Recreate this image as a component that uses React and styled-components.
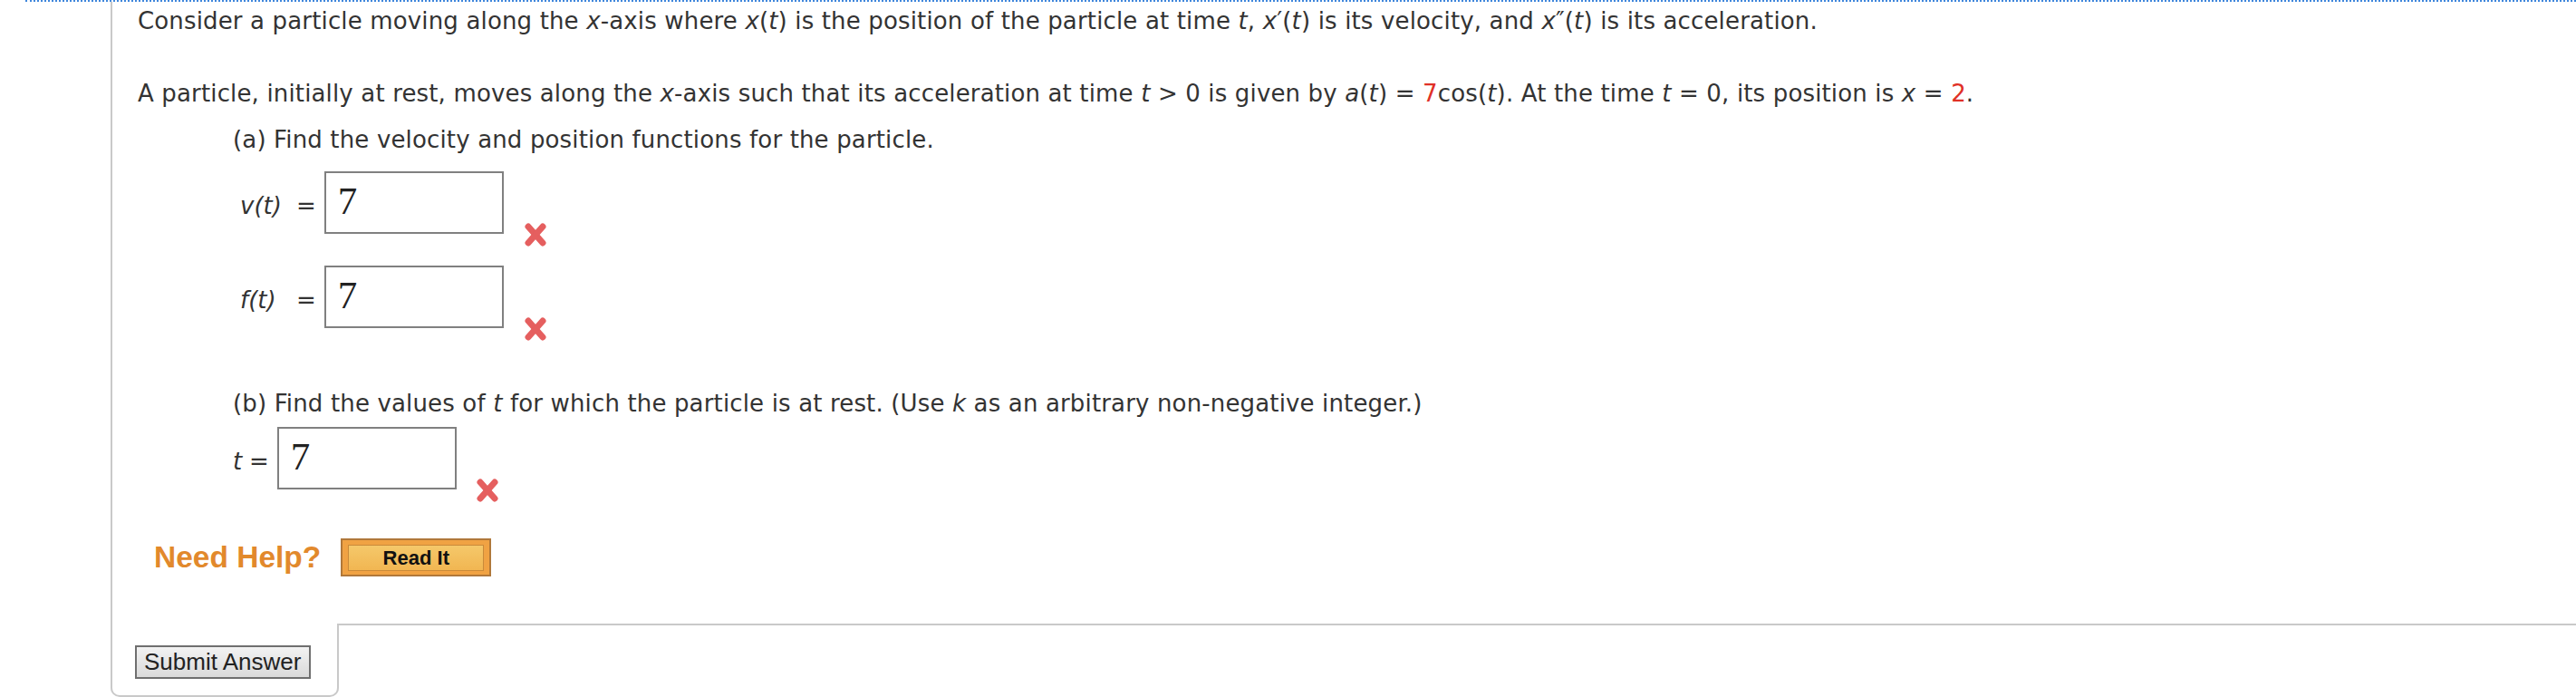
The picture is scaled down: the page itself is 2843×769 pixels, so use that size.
import React from 'react';
import styled, { createGlobalStyle } from 'styled-components';

const GlobalStyle = createGlobalStyle`
  html, body {
    margin: 0;
    padding: 0;
    background: #fff;
  }
  body {
    font-family: "DejaVu Sans", Verdana, sans-serif;
    color: #333;
  }
`;

const Page = styled.div`
  padding-left: 28px;
  width: 2843px;
  box-sizing: border-box;
`;

const Frame = styled.div`
  border-top: 2px dotted #3f86dc;
  padding-left: 94px;
`;

const Content = styled.div`
  border-left: 2px solid #c9c9c9;
  padding: 1px 0 52px 28px;
`;

const Para = styled.p`
  margin: ${p => p.$top || 0}px 0 0 0;
  font-size: 26px;
  line-height: 40px;
  letter-spacing: 0.15px;
  white-space: nowrap;
`;

const Var = styled.i`
  font-style: italic;
`;

const Red = styled.span`
  color: #e03127;
`;

const Part = styled.div`
  padding-left: 105px;
`;

const Row = styled.div`
  display: flex;
  align-items: baseline;
  margin-top: ${p => p.$top || 0}px;
  padding-left: ${p => p.$indent || 0}px;
  font-size: 26px;
  line-height: 40px;
`;

const Label = styled.span`
  min-width: ${p => p.$width || 0}px;
  font-style: italic;
`;

const Eq = styled.span`
  margin-right: 9px;
`;

const AnswerBox = styled.div`
  box-sizing: border-box;
  width: 198px;
  height: 69px;
  border: 2px solid #808080;
  padding: 10px 0 0 13px;
  font-family: "Liberation Serif", "Times New Roman", serif;
  font-size: 43px;
  line-height: 42px;
  color: #222;
`;

const Cross = styled.svg`
  align-self: flex-end;
  flex: none;
  width: 28px;
  height: 28px;
  margin: 0 0 -15px ${p => p.$gap || 21}px;
`;

const HelpRow = styled.div`
  display: flex;
  align-items: center;
  margin-top: 54px;
  padding-left: 18px;
`;

const NeedHelp = styled.span`
  font-family: "Liberation Sans", Arial, sans-serif;
  font-weight: bold;
  font-size: 33.5px;
  color: #e2892c;
  margin-right: 22px;
`;

const ReadIt = styled.button`
  box-sizing: border-box;
  width: 166px;
  height: 42px;
  padding: 5px 6px 4px;
  border: 2px solid #b0783a;
  background: #f0a243;
  cursor: pointer;
`;

const ReadItFace = styled.span`
  display: flex;
  align-items: center;
  justify-content: center;
  height: 100%;
  box-sizing: border-box;
  border: 1px solid #c98a3a;
  background: linear-gradient(#f5c86a, #f1b652);
  font-family: "Liberation Sans", Arial, sans-serif;
  font-weight: bold;
  font-size: 22px;
  color: #111;
`;

const Footer = styled.div`
  display: flex;
  align-items: flex-start;
`;

const Tab = styled.div`
  box-sizing: border-box;
  width: 252px;
  height: 81px;
  border: 2px solid #c9c9c9;
  border-top: none;
  border-radius: 0 0 10px 10px;
  padding: 24px 0 0 25px;
`;

const Filler = styled.div`
  flex: 1;
  border-top: 2px solid #c9c9c9;
`;

const SubmitButton = styled.button`
  box-sizing: border-box;
  width: 194px;
  height: 37px;
  padding: 0 0 0 8px;
  text-align: left;
  border: 2px solid #6f6f6f;
  background: linear-gradient(#f2f2f2, #dadada);
  font-family: "Liberation Sans", Arial, sans-serif;
  font-size: 26px;
  line-height: 33px;
  color: #222;
  cursor: pointer;
`;

const WrongMark = ({ gap }) => (
  <Cross $gap={gap} viewBox="0 0 28 28">
    <defs>
      <filter id="soft" x="-20%" y="-20%" width="140%" height="140%">
        <feGaussianBlur stdDeviation="0.6" />
      </filter>
    </defs>
    <g filter="url(#soft)" stroke="#e55e5e" strokeWidth="7" strokeLinecap="round">
      <path d="M6 5 L22 23" />
      <path d="M22 5 L6 23" />
    </g>
  </Cross>
);

const App = () => (
  <Page>
    <GlobalStyle />
    <Frame>
      <Content>
        <Para>
          Consider a particle moving along the <Var>x</Var>-axis where <Var>x</Var>(<Var>t</Var>) is the position of
          the particle at time <Var>t</Var>, <Var>x</Var>′(<Var>t</Var>) is its velocity, and <Var>x</Var>″(<Var>t</Var>) is its
          acceleration.
        </Para>
        <Para $top={40}>
          A particle, initially at rest, moves along the <Var>x</Var>-axis such that its acceleration at
          time <Var>t</Var> &gt; 0 is given by <Var>a</Var>(<Var>t</Var>) = <Red>7</Red>cos(<Var>t</Var>). At the
          time <Var>t</Var> = 0, its position is <Var>x</Var> = <Red>2</Red>.
        </Para>
        <Part>
          <Para $top={11}>(a) Find the velocity and position functions for the particle.</Para>
          <Row $top={15} $indent={8}>
            <Label $width={62}>v(t)</Label>
            <Eq>=</Eq>
            <AnswerBox>7</AnswerBox>
            <WrongMark gap={21} />
          </Row>
          <Row $top={35} $indent={8}>
            <Label $width={62}>f(t)</Label>
            <Eq>=</Eq>
            <AnswerBox>7</AnswerBox>
            <WrongMark gap={21} />
          </Row>
          <Para $top={63}>
            (b) Find the values of <Var>t</Var> for which the particle is at rest. (Use <Var>k</Var> as an
            arbitrary non-negative integer.)
          </Para>
          <Row $top={6}>
            <Label $width={18}>t</Label>
            <Eq>=</Eq>
            <AnswerBox>7</AnswerBox>
            <WrongMark gap={20} />
          </Row>
        </Part>
        <HelpRow>
          <NeedHelp>Need Help?</NeedHelp>
          <ReadIt>
            <ReadItFace>Read It</ReadItFace>
          </ReadIt>
        </HelpRow>
      </Content>
      <Footer>
        <Tab>
          <SubmitButton>Submit Answer</SubmitButton>
        </Tab>
        <Filler />
      </Footer>
    </Frame>
  </Page>
);

export default App;
